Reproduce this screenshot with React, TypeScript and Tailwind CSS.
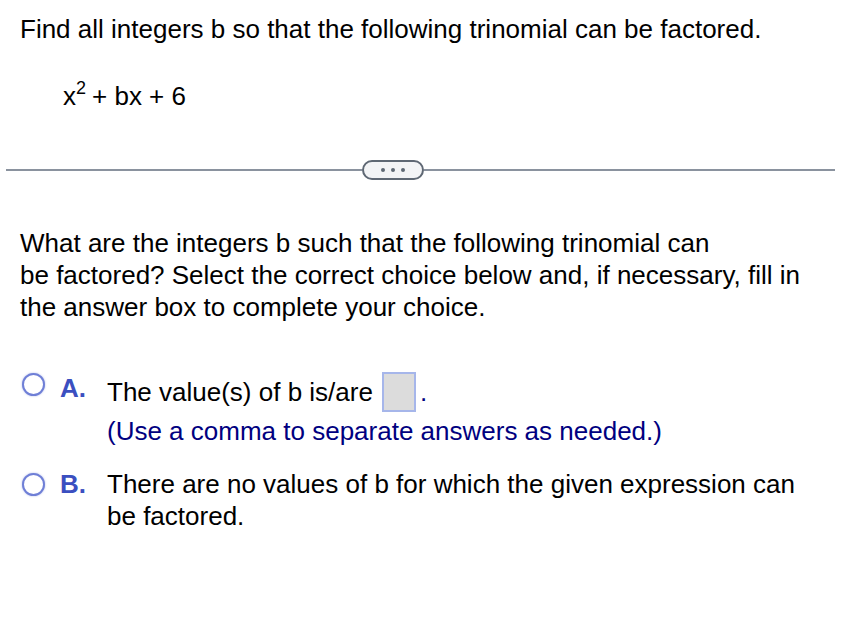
import React from 'react';

const font = { fontFamily: '"Liberation Sans", Arial, sans-serif' };

const Radio = ({ offset }: { offset: string }) => (
  <span className={`${offset} block h-[23px] w-[23px] shrink-0 rounded-full border-2 border-[#6f7fd6] bg-white shadow-[0_0_2px_rgba(90,110,210,0.5)]`} />
);

export default function App() {
  return (
    <div className="min-h-[640px] w-[842px] bg-white text-[26px] leading-8 text-black" style={font}>
      {/* Question */}
      <div className="px-[20px] pt-[13px]">
        <p>Find all integers b so that the following trinomial can be factored.</p>
        <p className="mt-[35px] pl-[43px] text-[26px]">
          x<sup className="relative -top-[11px] align-baseline text-[18px] leading-none">2</sup>
          <span className="ml-[6px]">+ bx + 6</span>
        </p>
      </div>

      {/* Divider */}
      <div className="mt-[48px] flex items-center pl-[6px] pr-[7px]">
        <div className="h-[2px] w-[356px] bg-[#8a929e]" />
        <div className="flex h-[20px] w-[62px] items-center justify-center gap-[6px] rounded-full border-2 border-[#5f6874] bg-[#f3f4f6]">
          <span className="h-[4px] w-[4px] rounded-full bg-[#5f6874]" />
          <span className="h-[4px] w-[4px] rounded-full bg-[#5f6874]" />
          <span className="h-[4px] w-[4px] rounded-full bg-[#5f6874]" />
        </div>
        <div className="h-[2px] flex-1 bg-[#8a929e]" />
      </div>

      {/* Prompt */}
      <div className="px-[20px] pt-[47px]">
        <p>
          What are the integers b such that the following trinomial can
          <br />
          be factored? Select the correct choice below and, if necessary, fill in
          <br />
          the answer box to complete your choice.
        </p>
      </div>

      {/* Choices */}
      <div className="mt-[49px] flex flex-col gap-[21px] pl-[22px]">
        <div className="flex items-start">
          <Radio offset="mt-[1px]" />
          <span className="ml-[15px] w-[47px] shrink-0 font-bold text-[#3b4fc0]">A.</span>
          <div>
            <div className="flex h-[40px] items-start">
              <span className="mt-[4px]">The value(s) of b is/are</span>
              <span className="ml-[9px] block h-[40px] w-[34px] border-2 border-[#a6b6ea] bg-[#dcdcdc]" />
              <span className="ml-[4px] mt-[4px] text-[#000080]">.</span>
            </div>
            <p className="mt-[3px] text-[#000080]">(Use a comma to separate answers as needed.)</p>
          </div>
        </div>
        <div className="flex items-start">
          <Radio offset="mt-[5px]" />
          <span className="ml-[15px] w-[47px] shrink-0 font-bold text-[#3b4fc0]">B.</span>
          <p>
            There are no values of b for which the given expression can
            <br />
            be factored.
          </p>
        </div>
      </div>
    </div>
  );
}
